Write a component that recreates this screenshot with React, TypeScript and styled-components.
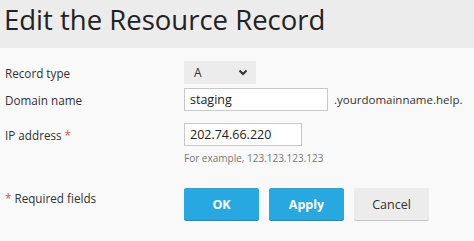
import React from "react";
import styled, { createGlobalStyle } from "styled-components";

const Global = createGlobalStyle`
  html, body { margin: 0; padding: 0; background: #f9f9f9; }
  body { font-family: "Open Sans", "Noto Sans", sans-serif; color: #333; }
  * { box-sizing: border-box; }
`;

const Page = styled.div`
  width: 474px;
  height: 241px;
  background: #f9f9f9;
  overflow: hidden;
`;

const Header = styled.div`
  height: 48px;
  background: #ececec;
  padding: 0 0 0 4px;
  display: flex;
  align-items: center;
`;

const Title = styled.h1`
  margin: 0;
  margin-top: -10px;
  font-size: 27.5px;
  font-weight: 400;
  color: #222;
`;

const Form = styled.div`
  display: flex;
  flex-direction: column;
  padding-top: 13px;
`;

const Row = styled.div<{ $mt?: number }>`
  display: grid;
  grid-template-columns: 184px auto;
  align-items: start;
  margin-top: ${(p) => p.$mt ?? 0}px;
`;

const Label = styled.div`
  padding-left: 5px;
  height: 23px;
  display: flex;
  align-items: center;
  font-size: 11.7px;
  color: #333;
`;

const Star = styled.span<{ $lead?: boolean }>`
  color: #d9534f;
  margin-left: ${(p) => (p.$lead ? 0 : 3)}px;
  margin-right: ${(p) => (p.$lead ? 3 : 0)}px;
`;

const Field = styled.div`
  display: flex;
  flex-direction: column;
`;

const Inline = styled.div`
  display: flex;
  align-items: center;
`;

const Select = styled.div`
  width: 72px;
  height: 23px;
  background: #ececec;
  display: flex;
  align-items: center;
  justify-content: space-between;
  padding: 0 8px 0 10px;
  font-size: 12px;
  color: #333;
`;

const Input = styled.div<{ $w: number }>`
  width: ${(p) => p.$w}px;
  height: 23px;
  border: 1px solid #c9c9c9;
  background: #fff;
  display: flex;
  align-items: center;
  padding: 0 0 0 5px;
  font-size: 12.5px;
  color: #222;
`;

const Suffix = styled.span`
  margin-left: 6px;
  font-size: 11.5px;
  color: #333;
`;

const Hint = styled.div`
  margin-top: 5px;
  font-size: 10px;
  color: #777;
`;

const Actions = styled.div`
  display: grid;
  grid-template-columns: 184px auto;
  margin-top: 23px;
`;

const Required = styled.div`
  padding-left: 5px;
  font-size: 11.7px;
  color: #333;
  padding-top: 2px;
`;

const Buttons = styled.div`
  display: flex;
  gap: 10px;
`;

const Button = styled.div<{ $primary?: boolean }>`
  width: 75px;
  height: 32px;
  display: flex;
  align-items: center;
  justify-content: center;
  font-size: 12.5px;
  font-weight: ${(p) => (p.$primary ? 700 : 400)};
  color: ${(p) => (p.$primary ? "#fff" : "#333")};
  background: ${(p) => (p.$primary ? "#28a8e0" : "#ececec")};
  border-radius: 2px;
  box-shadow: 0 1px 0 ${(p) => (p.$primary ? "#1f8dbd" : "#c8c8c8")};
`;

const Chevron = () => (
  <svg width="10" height="7" viewBox="0 0 10 7">
    <path d="M1.5 1.5 L5 5 L8.5 1.5" fill="none" stroke="#333" strokeWidth="2" />
  </svg>
);

export default function App() {
  return (
    <Page>
      <Global />
      <Header>
        <Title>Edit the Resource Record</Title>
      </Header>
      <Form>
        <Row>
          <Label>Record type</Label>
          <Select>
            <span>A</span>
            <Chevron />
          </Select>
        </Row>
        <Row $mt={4}>
          <Label>Domain name</Label>
          <Inline>
            <Input $w={144}>staging</Input>
            <Suffix>.yourdomainname.help.</Suffix>
          </Inline>
        </Row>
        <Row $mt={12}>
          <Label>
            IP address<Star>*</Star>
          </Label>
          <Field>
            <Input $w={118}>202.74.66.220</Input>
            <Hint>For example, 123.123.123.123</Hint>
          </Field>
        </Row>
        <Actions>
          <Required>
            <Star $lead>*</Star>Required fields
          </Required>
          <Buttons>
            <Button $primary>OK</Button>
            <Button $primary>Apply</Button>
            <Button>Cancel</Button>
          </Buttons>
        </Actions>
      </Form>
    </Page>
  );
}
